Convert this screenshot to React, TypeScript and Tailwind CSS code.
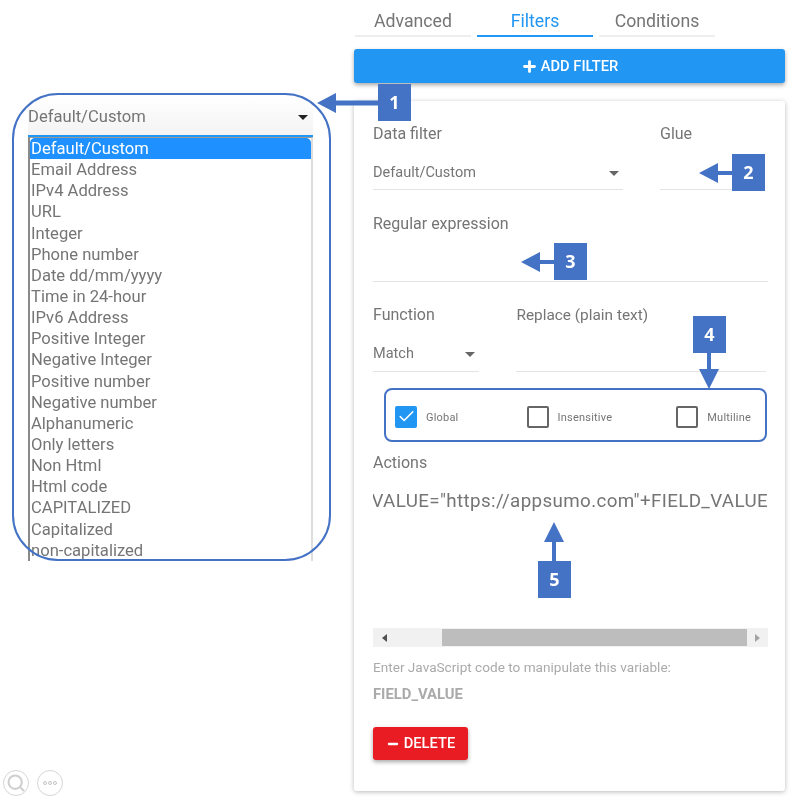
import { Check, Plus, Minus, Search } from 'lucide-react';

const options = [
  'Default/Custom',
  'Email Address',
  'IPv4 Address',
  'URL',
  'Integer',
  'Phone number',
  'Date dd/mm/yyyy',
  'Time in 24-hour',
  'IPv6 Address',
  'Positive Integer',
  'Negative Integer',
  'Positive number',
  'Negative number',
  'Alphanumeric',
  'Only letters',
  'Non Html',
  'Html code',
  'CAPITALIZED',
  'Capitalized',
  'non-capitalized',
];

const Caret = ({ className }: { className: string }) => (
  <span className={`h-0 w-0 border-x-[5px] border-t-[5px] border-x-transparent ${className}`} />
);

const Checkbox = ({ label, checked, className }: { label: string; checked?: boolean; className?: string }) => (
  <div className={`flex items-center gap-[9px] ${className ?? ''}`}>
    {checked ? (
      <span className="flex h-[22px] w-[22px] items-center justify-center rounded-[2px] bg-[#2196f3]">
        <Check size={19} strokeWidth={2} className="text-white" />
      </span>
    ) : (
      <span className="h-[22px] w-[22px] rounded-[2px] border-2 border-[#666666]" />
    )}
    <span className="mt-[3px] text-[11px] tracking-[0.2px] text-[#757575]">{label}</span>
  </div>
);

const Badge = ({ n, className }: { n: number; className: string }) => (
  <div
    className={`absolute flex h-[37px] w-[33px] items-center justify-center bg-[#4472c4] font-['Open_Sans',sans-serif] text-[18px] font-bold text-white ${className}`}
  >
    {n}
  </div>
);

const App = () => {
  return (
    <div className="relative flex h-[800px] w-[797px] overflow-hidden bg-white font-['Roboto',sans-serif] text-[#757575] blur-[0.4px]">
      {/* left: open dropdown */}
      <div className="w-[354px] shrink-0 pl-[28px] pr-[41px] pt-[97px]">
        <div className="flex h-[40px] items-center justify-between border-b-2 border-[#2196f3] bg-gradient-to-b from-white to-[#f3f3f3] pr-[5px] pt-[2px]">
          <span className="text-[16.6px] leading-none">Default/Custom</span>
          <Caret className="border-t-[#222222]" />
        </div>
        <div className="h-[424px] overflow-hidden border-x-2 border-l-[#8a8a8a] border-r-[#dddddd] border-t border-t-[#999999]">
          {options.map((o, i) => (
            <div
              key={o}
              className={`h-[21.15px] pl-px text-[16.6px] leading-[21px] ${i === 0 ? 'rounded-t-[5px] bg-[#1e90ff] text-white' : ''}`}
            >
              {o}
            </div>
          ))}
        </div>
      </div>

      {/* right: filter panel */}
      <div className="w-[431px] shrink-0">
        <div className="flex h-[37px] gap-[6px] pl-px">
          <div className="flex h-full w-[116px] items-end justify-center border-b-2 border-[#eeeeee] pb-[2px] text-[17.7px] leading-[24px]">
            Advanced
          </div>
          <div className="flex h-full w-[116px] items-end justify-center border-b-2 border-[#2196f3] pb-[2px] text-[17.7px] leading-[24px] text-[#2196f3]">
            Filters
          </div>
          <div className="flex h-full w-[116px] items-end justify-center border-b-2 border-[#eeeeee] pb-[2px] text-[17.7px] leading-[24px]">
            Conditions
          </div>
        </div>

        <button className="mt-[12px] flex h-[34px] w-full items-center justify-center gap-[3px] rounded-[3px] bg-[#2196f3] text-[14.7px] font-medium text-white shadow-[0_2px_4px_rgba(0,0,0,0.35)]">
          <Plus size={17} strokeWidth={4} />
          ADD FILTER
        </button>

        <div className="mt-[18px] h-[690px] rounded-[3px] bg-white px-[19px] pt-[24px] shadow-[0_1px_5px_rgba(0,0,0,0.28)]">
          <div className="flex gap-[37px]">
            <div className="w-[250px]">
              <div className="h-[18px] text-[16px] leading-[18px]">Data filter</div>
              <div className="mt-[18px] flex h-[29px] items-center justify-between border-b border-[#e4e4e4] pb-[4px] pr-[4px] text-[14.5px]">
                Default/Custom
                <Caret className="border-t-[#666666]" />
              </div>
            </div>
            <div className="w-[105px]">
              <div className="h-[18px] text-[16px] leading-[18px]">Glue</div>
              <div className="mt-[18px] h-[29px] border-b border-[#e4e4e4]" />
            </div>
          </div>

          <div className="mt-[25px] h-[18px] text-[16px] leading-[18px]">Regular expression</div>
          <div className="mt-[20px] h-[29px] w-[395px] border-b border-[#e4e4e4]" />

          <div className="mt-[24px] flex gap-[37px]">
            <div className="w-[107px]">
              <div className="h-[18px] text-[16px] leading-[18px]">Function</div>
              <div className="mt-[17px] flex h-[31px] items-center justify-between border-b border-[#e4e4e4] pb-[4px] pr-[4px] text-[14.5px]">
                Match
                <Caret className="border-t-[#666666]" />
              </div>
            </div>
            <div className="w-[251px]">
              <div className="h-[18px] text-[15.4px] leading-[18px]">Replace (plain text)</div>
              <div className="mt-[17px] h-[31px] border-b border-[#e4e4e4]" />
            </div>
          </div>

          <div className="ml-[11px] mt-[16px] flex h-[54px] w-[383px] items-center justify-between rounded-[8px] border-2 border-[#4472c4] pl-[9px] pr-[14px] pt-[3px]">
            <Checkbox label="Global" checked />
            <Checkbox label="Insensitive" className="ml-[4px]" />
            <Checkbox label="Multiline" />
          </div>

          <div className="mt-[12px] h-[18px] text-[16px] leading-[18px]">Actions</div>
          <div className="mt-[17px] flex h-[24px] w-[395px] justify-end overflow-hidden whitespace-nowrap text-[18.8px] leading-[24px] tracking-[0.36px]">
            FIELD_VALUE="https://appsumo.com"+FIELD_VALUE
          </div>

          <div className="mt-[115px] flex h-[19px] w-[395px] items-center bg-[#f1f1f1]">
            <div className="flex w-[22px] justify-center">
              <span className="h-0 w-0 border-y-[4px] border-r-[5px] border-y-transparent border-r-[#505050]" />
            </div>
            <div className="ml-[47px] h-[17px] w-[305px] bg-[#bdbdbd]" />
            <div className="flex flex-1 justify-center">
              <span className="h-0 w-0 border-y-[4px] border-l-[5px] border-y-transparent border-l-[#a3a3a3]" />
            </div>
          </div>

          <div className="mt-[11px] text-[13.6px] leading-[18px] text-[#aaaaaa]">
            Enter JavaScript code to manipulate this variable:
          </div>
          <div className="mt-[9px] text-[14.8px] font-bold leading-[18px] text-[#aaaaaa]">FIELD_VALUE</div>

          <button className="mt-[24px] flex h-[33px] w-[95px] items-center justify-center gap-[4px] rounded-[3px] bg-[#e91c24] text-[14.7px] font-medium text-white shadow-[0_2px_4px_rgba(0,0,0,0.35)]">
            <Minus size={14} strokeWidth={4} />
            DELETE
          </button>
        </div>
      </div>

      {/* callouts over the screenshot */}
      <div className="absolute left-[12px] top-[93px] h-[468px] w-[319px] rounded-[46px] border-2 border-[#4472c4]" />

      <svg className="absolute left-[317px] top-[92px]" width="62" height="22" viewBox="0 0 62 22">
        <path d="M0 11 L19 1 V8.5 H62 V13.5 H19 V21 Z" fill="#4472c4" />
      </svg>
      <Badge n={1} className="left-[378px] top-[84px]" />

      <svg className="absolute left-[699px] top-[163px]" width="34" height="20" viewBox="0 0 34 20">
        <path d="M0 10 L19 0 V8 H34 V12 H19 V20 Z" fill="#4472c4" />
      </svg>
      <Badge n={2} className="left-[732px] top-[154px]" />

      <svg className="absolute left-[521px] top-[252px]" width="34" height="20" viewBox="0 0 34 20">
        <path d="M0 10 L19 0 V8 H34 V12 H19 V20 Z" fill="#4472c4" />
      </svg>
      <Badge n={3} className="left-[554px] top-[243px]" />

      <svg className="absolute left-[699px] top-[352px]" width="20" height="37" viewBox="0 0 20 37">
        <path d="M10 37 L0 17 H8 V0 H12 V17 H20 Z" fill="#4472c4" />
      </svg>
      <Badge n={4} className="left-[693px] top-[316px]" />

      <svg className="absolute left-[544px] top-[522px]" width="20" height="40" viewBox="0 0 20 40">
        <path d="M10 0 L20 20 H12 V40 H8 V20 H0 Z" fill="#4472c4" />
      </svg>
      <Badge n={5} className="left-[538px] top-[561px]" />

      {/* floating viewer controls */}
      <div className="absolute left-[3px] top-[770px] flex gap-[8px]">
        <div className="flex h-[26px] w-[26px] items-center justify-center rounded-full border border-[#d6d6d6]">
          <Search size={20} strokeWidth={2.5} className="text-[#cfcfcf]" />
        </div>
        <div className="flex h-[26px] w-[26px] items-center justify-center gap-px rounded-full border border-[#d6d6d6]">
          <span className="h-[4px] w-[4px] rounded-full border border-[#c4c4c4]" />
          <span className="h-[4px] w-[4px] rounded-full border border-[#c4c4c4]" />
          <span className="h-[4px] w-[4px] rounded-full border border-[#c4c4c4]" />
        </div>
      </div>
    </div>
  );
};

export default App;
